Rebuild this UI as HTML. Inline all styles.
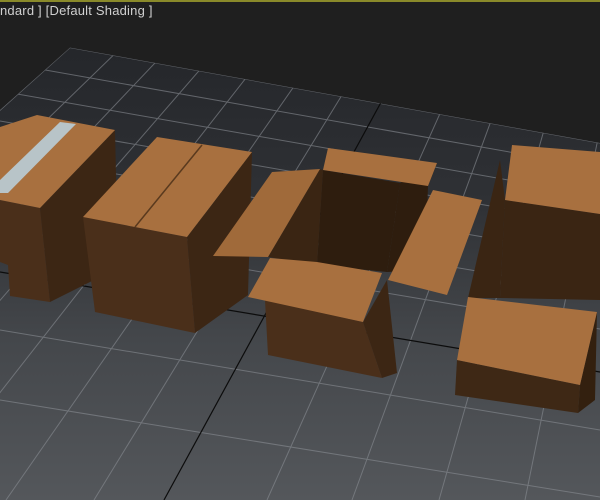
<!DOCTYPE html>
<html><head><style>
html,body{margin:0;padding:0;overflow:hidden;}
body{width:600px;height:500px;overflow:hidden;background:#1f1f1f;position:relative;font-family:"Liberation Sans",sans-serif;}
.bar{position:absolute;left:0;top:0;width:600px;height:2px;background:#8a8a2a;}
.lbl{position:absolute;left:0;top:3px;color:#d0d0d0;font-size:13px;letter-spacing:0.2px;}
svg{position:absolute;left:0;top:0;overflow:hidden;}
</style></head><body>
<svg width="600" height="500" viewBox="0 0 600 500">
<defs>
<linearGradient id="g" x1="0" y1="40" x2="0" y2="500" gradientUnits="userSpaceOnUse">
<stop offset="0" stop-color="#24262a"/>
<stop offset="0.35" stop-color="#2f3135"/>
<stop offset="0.65" stop-color="#44474b"/>
<stop offset="1" stop-color="#54575b"/>
</linearGradient>
<clipPath id="c"><polygon points="70,47.6 600,143 600,500 0,500 0,110"/></clipPath>
</defs>
<rect x="0" y="0" width="600" height="500" fill="url(#g)" clip-path="url(#c)"/>
<g clip-path="url(#c)" stroke="#8a8e94" stroke-width="1" opacity="0.6">
<line x1="0" y1="35" x2="600" y2="143"/>
<line x1="0" y1="62" x2="600" y2="168"/>
<line x1="0" y1="91" x2="600" y2="196"/>
<line x1="0" y1="121" x2="600" y2="225"/>
<line x1="0" y1="154" x2="600" y2="257"/>
<line x1="0" y1="190" x2="600" y2="292"/>
<line x1="0" y1="228" x2="600" y2="329"/>
<line x1="0" y1="330" x2="600" y2="430"/>
<line x1="0" y1="400" x2="600" y2="497"/>
<line x1="737" y1="-550" x2="-435" y2="500"/>
<line x1="737" y1="-550" x2="-345" y2="500"/>
<line x1="737" y1="-550" x2="-260" y2="500"/>
<line x1="737" y1="-550" x2="-173" y2="500"/>
<line x1="737" y1="-550" x2="-84" y2="500"/>
<line x1="737" y1="-550" x2="6" y2="500"/>
<line x1="737" y1="-550" x2="94" y2="500"/>
<line x1="737" y1="-550" x2="267" y2="500"/>
<line x1="737" y1="-550" x2="352" y2="500"/>
<line x1="737" y1="-550" x2="439" y2="500"/>
<line x1="737" y1="-550" x2="525" y2="500"/>
<line x1="737" y1="-550" x2="608" y2="500"/>
</g>
<g clip-path="url(#c)" stroke="#0c0c0c" stroke-width="1.2">
<line x1="0" y1="272" x2="600" y2="372"/>
<line x1="737" y1="-550" x2="164" y2="500"/>
</g>

<!-- box 1 -->
<polygon points="0,200 40,208 50,302 10,296 8,265 0,262" fill="#4a2f1a"/>
<polygon points="40,208 115,130 118,268 50,302" fill="#3c2614"/>
<polygon points="0,127 37,115 115,130 40,208 0,200" fill="#a8703f"/>
<polygon points="60,122 76,124 8,193 0,193 0,180" fill="#b8c4c8"/>

<!-- box 2 -->
<polygon points="83,217 187,237 195,333 95,312" fill="#4a2f1a"/>
<polygon points="187,237 252,152 248,295 195,333" fill="#3c2614"/>
<polygon points="83,217 157,137 252,152 187,237" fill="#a8703f"/>
<line x1="135" y1="227" x2="202" y2="145" stroke="#5a3a1e" stroke-width="1.5"/>

<!-- box 3 open -->
<polygon points="323,170 400,183 387,272 317,265" fill="#2e1d0e"/>
<polygon points="268,257 320,169 323,170 317,265" fill="#3a2513"/>
<polygon points="400,183 437,163 428,186 425,270 387,272" fill="#2e1d0e"/>
<polygon points="213,256 272,172 320,169 268,257" fill="#a06a3a"/>
<polygon points="328,148 437,163 428,186 323,170" fill="#a8703f"/>
<polygon points="433,190 482,200 447,295 388,280" fill="#a8703f"/>
<polygon points="265,300 363,322 382,378 268,355" fill="#4a2f1a"/>
<polygon points="363,322 387,280 397,373 382,378" fill="#3c2614"/>
<polygon points="248,297 270,258 317,262 382,273 363,322" fill="#a8703f"/>

<!-- box 4 -->
<polygon points="505,200 600,214 600,300 500,298" fill="#3a2513"/>
<polygon points="500,160 505,200 500,298 468,298" fill="#3a2513"/>
<polygon points="512,145 600,152 600,214 505,200" fill="#a8703f"/>
<polygon points="457,360 580,385 578,413 455,395" fill="#3e2815"/>
<polygon points="580,385 597,312 595,400 578,413" fill="#33200f"/>
<polygon points="468,297 597,312 580,385 457,360" fill="#a8703f"/>
</svg>
<div class="bar"></div>
<div class="lbl">ndard ] [Default Shading ]</div>
</body></html>
